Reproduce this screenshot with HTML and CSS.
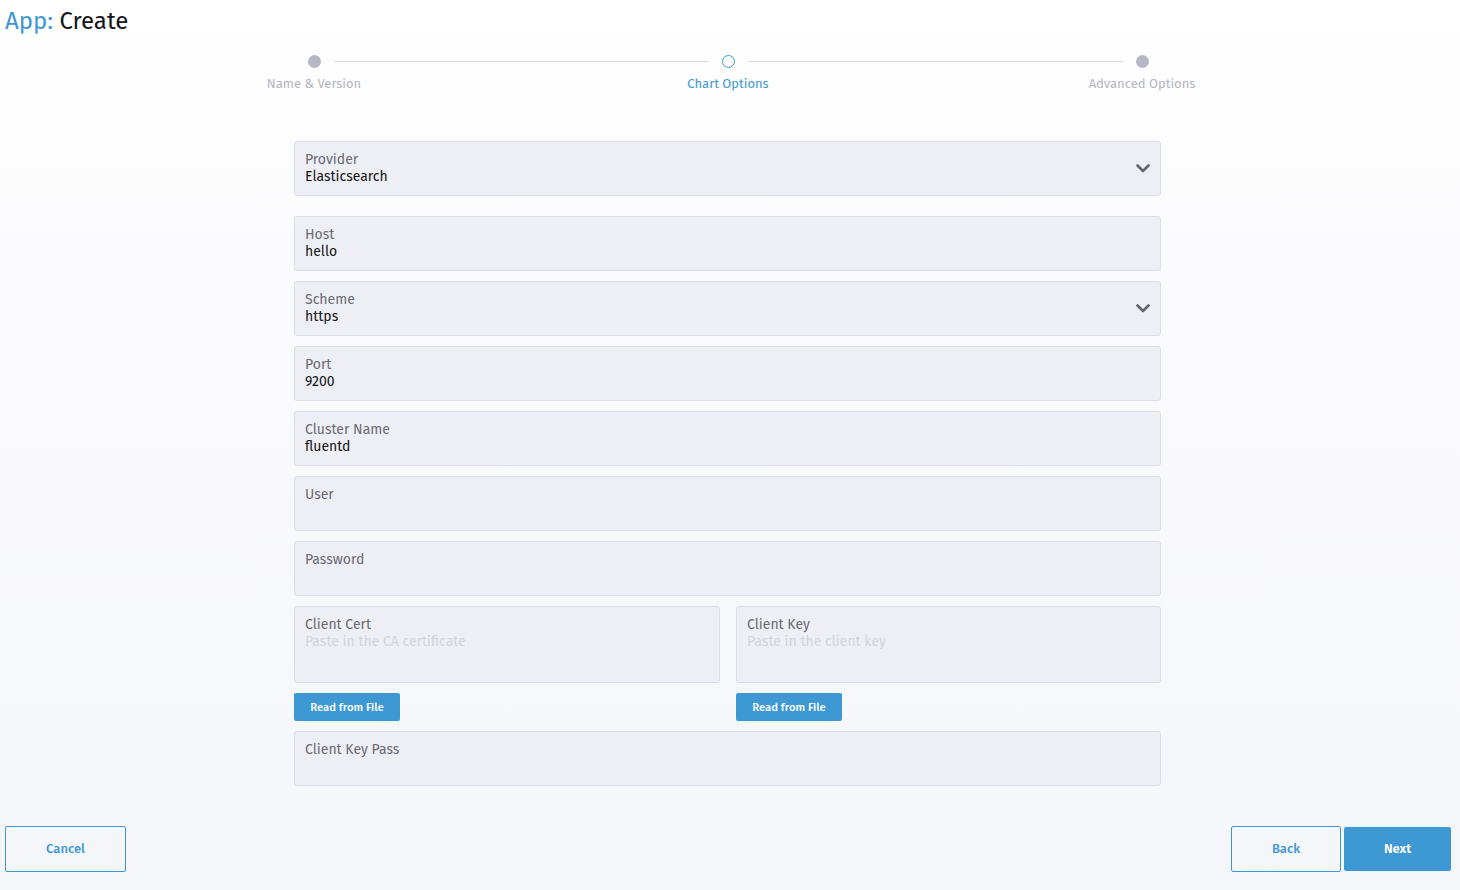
FILE: index.html
```html
<!DOCTYPE html>
<html lang="en">
<head>
<meta charset="utf-8">
<title>App: Create</title>
<link rel="stylesheet" href="styles.css">
</head>
<body>
<div class="page">
  <h1 class="title"><span class="title-app">App:</span> Create</h1>

  <div class="stepper">
    <div class="dots">
      <span class="dot"></span>
      <span class="line"></span>
      <span class="dot dot-active"></span>
      <span class="line"></span>
      <span class="dot"></span>
    </div>
    <div class="labels">
      <span class="step-label">Name &amp; Version</span>
      <span class="step-label step-label-active">Chart Options</span>
      <span class="step-label">Advanced Options</span>
    </div>
  </div>

  <form class="form">
    <div class="field field-select field-first">
      <div class="field-body">
        <div class="field-label">Provider</div>
        <div class="field-value">Elasticsearch</div>
      </div>
      <svg class="chevron" width="14" height="9" viewBox="0 0 14 9"><polyline points="1.5,1.5 7,7 12.5,1.5" fill="none" stroke="#64646e" stroke-width="2.6" stroke-linecap="round" stroke-linejoin="round"/></svg>
    </div>

    <div class="field">
      <div class="field-body">
        <div class="field-label">Host</div>
        <div class="field-value">hello</div>
      </div>
    </div>

    <div class="field field-select">
      <div class="field-body">
        <div class="field-label">Scheme</div>
        <div class="field-value">https</div>
      </div>
      <svg class="chevron" width="14" height="9" viewBox="0 0 14 9"><polyline points="1.5,1.5 7,7 12.5,1.5" fill="none" stroke="#64646e" stroke-width="2.6" stroke-linecap="round" stroke-linejoin="round"/></svg>
    </div>

    <div class="field">
      <div class="field-body">
        <div class="field-label">Port</div>
        <div class="field-value">9200</div>
      </div>
    </div>

    <div class="field">
      <div class="field-body">
        <div class="field-label">Cluster Name</div>
        <div class="field-value">fluentd</div>
      </div>
    </div>

    <div class="field">
      <div class="field-body">
        <div class="field-label">User</div>
        <div class="field-value"></div>
      </div>
    </div>

    <div class="field">
      <div class="field-body">
        <div class="field-label">Password</div>
        <div class="field-value"></div>
      </div>
    </div>

    <div class="pair">
      <div class="pair-col">
        <div class="field field-area">
          <div class="field-body">
            <div class="field-label">Client Cert</div>
            <div class="field-placeholder">Paste in the CA certificate</div>
          </div>
        </div>
        <button type="button" class="btn-file">Read from File</button>
      </div>
      <div class="pair-col">
        <div class="field field-area">
          <div class="field-body">
            <div class="field-label">Client Key</div>
            <div class="field-placeholder">Paste in the client key</div>
          </div>
        </div>
        <button type="button" class="btn-file">Read from File</button>
      </div>
    </div>

    <div class="field">
      <div class="field-body">
        <div class="field-label">Client Key Pass</div>
        <div class="field-value"></div>
      </div>
    </div>
  </form>

  <div class="footer">
    <button type="button" class="btn btn-outline btn-cancel">Cancel</button>
    <div class="footer-right">
      <button type="button" class="btn btn-outline btn-back">Back</button>
      <button type="button" class="btn btn-primary btn-next">Next</button>
    </div>
  </div>
</div>
</body>
</html>
```
FILE: styles.css
```css
html, body {
  margin: 0;
  padding: 0;
}

body {
  font-family: "Fira Sans", Roboto, "Open Sans", sans-serif;
  color: #141419;
  background: #f5f6fa;
}

.page {
  min-height: 890px;
  background: linear-gradient(to bottom, #ffffff 0%, #fbfbfd 30%, #f5f6fa 100%);
  box-sizing: border-box;
}

.title {
  margin: 0;
  padding: 0 0 0 5px;
  height: 42px;
  line-height: 42px;
  font-size: 24px;
  font-weight: 400;
  color: #141419;
}

.title-app {
  color: #3d98d3;
}

.stepper {
  width: 1242px;
  margin: 0 auto;
  position: relative;
  left: -2px;
}

.dots {
  display: flex;
  align-items: center;
  padding: 13px 200.5px 0;
}

.dot {
  width: 13px;
  height: 13px;
  border-radius: 50%;
  background: #b6b6c4;
  box-sizing: border-box;
  flex: none;
}

.dot-active {
  background: #ffffff;
  border: 1.5px solid #3d98d3;
}

.line {
  flex: 1;
  height: 1px;
  background: #d6d8e4;
  margin: 0 13px;
}

.labels {
  display: grid;
  grid-template-columns: repeat(3, 414px);
  margin-top: 8px;
}

.step-label {
  text-align: center;
  font-size: 13px;
  line-height: 16px;
  color: #b4b4c0;
}

.step-label-active {
  color: #3d98d3;
}

.form {
  width: 867px;
  margin: 49px 0 0 calc(50% - 436px);
  display: flex;
  flex-direction: column;
  gap: 10px;
}

.field {
  display: flex;
  align-items: center;
  box-sizing: border-box;
  height: 55px;
  padding: 0 10px 0 10px;
  background: #eeeff4;
  border: 1px solid #dcdde6;
  border-radius: 3px;
}

.field-first {
  margin-bottom: 10px;
}

.field-body {
  flex: 1;
  align-self: flex-start;
  padding-top: 9px;
}

.field-label {
  font-size: 14px;
  line-height: 17px;
  color: #6a6a74;
}

.field-value {
  font-size: 14px;
  line-height: 17px;
  color: #141419;
  min-height: 17px;
}

.field-placeholder {
  font-size: 14px;
  line-height: 17px;
  color: #d2d3dd;
}

.chevron {
  flex: none;
}

.field-area {
  height: 77px;
}

.pair {
  display: grid;
  grid-template-columns: 426px 425px;
  column-gap: 16px;
}

.pair-col {
  display: flex;
  flex-direction: column;
  align-items: flex-start;
  gap: 10px;
}

.pair-col .field {
  align-self: stretch;
}

.btn-file {
  height: 28px;
  width: 106px;
  padding: 0;
  border: none;
  border-radius: 2px;
  background: #3d98d3;
  color: #ffffff;
  font-family: inherit;
  font-size: 11.3px;
  font-weight: 500;
}

.footer {
  display: flex;
  justify-content: space-between;
  align-items: center;
  margin-top: 40px;
  padding: 0 9px 0 5px;
}

.footer-right {
  display: flex;
  align-items: center;
  gap: 3px;
}

.btn {
  font-family: inherit;
  font-size: 13px;
  line-height: 1;
  border-radius: 2px;
  padding: 0 0 2px;
  box-sizing: border-box;
}

.btn-outline {
  height: 46px;
  background: transparent;
  border: 1px solid #3d98d3;
  color: #3d98d3;
  font-weight: 500;
}

.btn-cancel {
  width: 121px;
}

.btn-back {
  width: 110px;
}

.btn-primary {
  height: 44px;
  width: 107px;
  background: #3d98d3;
  border: none;
  color: #ffffff;
  font-weight: 600;
}
```
